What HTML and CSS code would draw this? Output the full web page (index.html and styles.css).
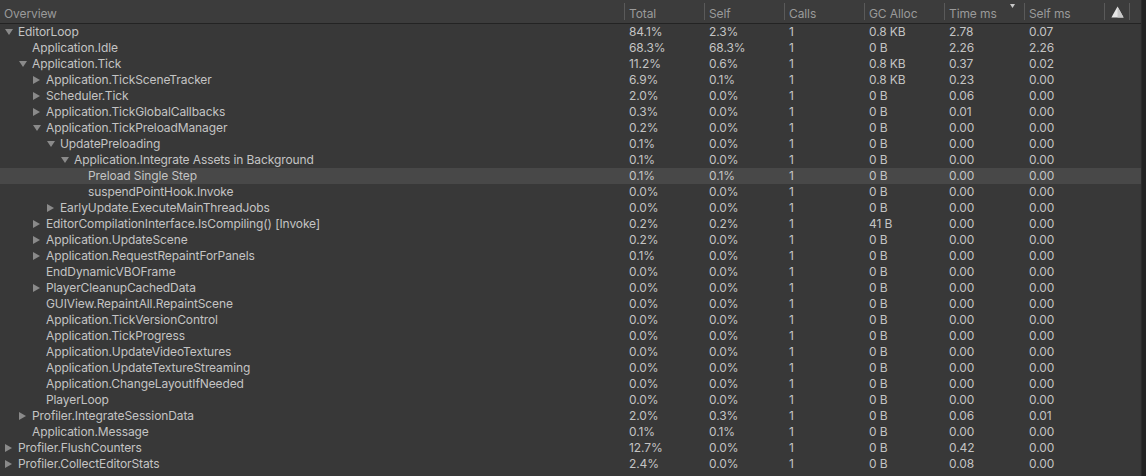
FILE: index.html
```html
<!DOCTYPE html>
<html>
<head>
<meta charset="utf-8">
<link rel="stylesheet" href="styles.css">
</head>
<body>
<div class="panel">
  <div class="table">
    <div class="head">
      <div class="hc name">Overview</div>
      <div class="hc num sep">Total</div>
      <div class="hc num sep">Self</div>
      <div class="hc num sep">Calls</div>
      <div class="hc num sep">GC Alloc</div>
      <div class="hc num sep sorted">Time ms<svg class="sort" width="5" height="4" viewBox="0 0 5 4"><path d="M0 0H5L2.5 4Z" fill="#c8c8c8"/></svg></div>
      <div class="hc num sep">Self ms</div>
      <div class="hc warn sep"><svg width="13" height="12" viewBox="0 0 13 12"><path d="M6.5 0.5L12.6 11.5H0.4Z" fill="#e6e6e6"/><path d="M6.5 0.5L12.6 11.5H6.5Z" fill="#c9c9c9"/></svg></div>
      <div class="hc tail sep"></div>
    </div>
    <div class="body" id="body"></div>
  </div>
  <div class="edge"></div>
</div>
<script src="app.js"></script>
</body>
</html>
```

FILE: app.js
```js
const rows = [
  [0,'e','EditorLoop','84.1%','2.3%','1','0.8 KB','2.78','0.07'],
  [1,'','Application.Idle','68.3%','68.3%','1','0 B','2.26','2.26'],
  [1,'e','Application.Tick','11.2%','0.6%','1','0.8 KB','0.37','0.02'],
  [2,'c','Application.TickSceneTracker','6.9%','0.1%','1','0.8 KB','0.23','0.00'],
  [2,'c','Scheduler.Tick','2.0%','0.0%','1','0 B','0.06','0.00'],
  [2,'c','Application.TickGlobalCallbacks','0.3%','0.0%','1','0 B','0.01','0.00'],
  [2,'e','Application.TickPreloadManager','0.2%','0.0%','1','0 B','0.00','0.00'],
  [3,'e','UpdatePreloading','0.1%','0.0%','1','0 B','0.00','0.00'],
  [4,'e','Application.Integrate Assets in Background','0.1%','0.0%','1','0 B','0.00','0.00'],
  [5,'','Preload Single Step','0.1%','0.1%','1','0 B','0.00','0.00','hl'],
  [5,'','suspendPointHook.Invoke','0.0%','0.0%','1','0 B','0.00','0.00'],
  [3,'c','EarlyUpdate.ExecuteMainThreadJobs','0.0%','0.0%','1','0 B','0.00','0.00'],
  [2,'c','EditorCompilationInterface.IsCompiling() [Invoke]','0.2%','0.2%','1','41 B','0.00','0.00'],
  [2,'c','Application.UpdateScene','0.2%','0.0%','1','0 B','0.00','0.00'],
  [2,'c','Application.RequestRepaintForPanels','0.1%','0.0%','1','0 B','0.00','0.00'],
  [2,'','EndDynamicVBOFrame','0.0%','0.0%','1','0 B','0.00','0.00'],
  [2,'c','PlayerCleanupCachedData','0.0%','0.0%','1','0 B','0.00','0.00'],
  [2,'','GUIView.RepaintAll.RepaintScene','0.0%','0.0%','1','0 B','0.00','0.00'],
  [2,'','Application.TickVersionControl','0.0%','0.0%','1','0 B','0.00','0.00'],
  [2,'','Application.TickProgress','0.0%','0.0%','1','0 B','0.00','0.00'],
  [2,'','Application.UpdateVideoTextures','0.0%','0.0%','1','0 B','0.00','0.00'],
  [2,'','Application.UpdateTextureStreaming','0.0%','0.0%','1','0 B','0.00','0.00'],
  [2,'','Application.ChangeLayoutIfNeeded','0.0%','0.0%','1','0 B','0.00','0.00'],
  [2,'','PlayerLoop','0.0%','0.0%','1','0 B','0.00','0.00'],
  [1,'c','Profiler.IntegrateSessionData','2.0%','0.3%','1','0 B','0.06','0.01'],
  [1,'','Application.Message','0.1%','0.1%','1','0 B','0.00','0.00'],
  [0,'c','Profiler.FlushCounters','12.7%','0.0%','1','0 B','0.42','0.00'],
  [0,'c','Profiler.CollectEditorStats','2.4%','0.0%','1','0 B','0.08','0.00']
];
const exp = '<svg width="8" height="6" viewBox="0 0 8 6"><path d="M0 0H8L4 6Z" fill="#8a8a8a"/></svg>';
const col = '<svg width="7" height="8" viewBox="0 0 7 8"><path d="M0 0L7 4L0 8Z" fill="#8a8a8a"/></svg>';
const body = document.getElementById('body');
let html = '';
for (const r of rows) {
  const [lvl, kind, name, ...rest] = r;
  const hl = rest[6] === 'hl';
  const vals = rest.slice(0, 6);
  const icon = kind === 'e' ? exp : kind === 'c' ? col : '';
  html += '<div class="row' + (hl ? ' hl' : '') + '">' +
    '<div class="cell name"><span class="indent" style="width:' + (lvl * 14) + 'px"></span><span class="tog">' + icon + '</span><span class="label">' + name + '</span></div>' +
    vals.map(v => '<div class="cell num">' + v + '</div>').join('') +
    '<div class="cell warn"></div><div class="cell tail"></div></div>';
}
body.innerHTML = html;
```

FILE: styles.css
```css
html, body {
  margin: 0;
  padding: 0;
  background: #383838;
}
body {
  font-family: Inter, "Noto Sans", "Liberation Sans", sans-serif;
  font-size: 12px;
  letter-spacing: -0.1px;
  color: #c4c4c4;
  width: 1146px;
  height: 476px;
  overflow: hidden;
}
.panel {
  display: flex;
  height: 476px;
}
.table {
  width: 1142px;
  display: flex;
  flex-direction: column;
}
.edge {
  width: 4px;
  background: #232323;
  border-left: 1px solid #2c2c2c;
}
.head {
  display: flex;
  height: 23px;
  background: #3c3c3c;
  border-bottom: 1px solid #232323;
  color: #9a9a9a;
}
.hc {
  position: relative;
  display: flex;
  align-items: center;
  padding-left: 5px;
  box-sizing: border-box;
  padding-top: 4px;
}
.hc.sep::before {
  content: "";
  position: absolute;
  left: 0;
  top: 3px;
  bottom: 3px;
  width: 1px;
  background: #5a5a5a;
}
.name {
  width: 624px;
  box-sizing: border-box;
}
.hc.name {
  padding-left: 4px;
}
.num {
  width: 80px;
  box-sizing: border-box;
  padding-left: 5px;
}
.warn {
  width: 25px;
  box-sizing: border-box;
}
.hc.warn {
  justify-content: center;
  padding-left: 1px;
  padding-top: 1px;
}
.tail {
  flex: 1;
}
.sort {
  position: absolute;
  top: 4px;
  right: 9px;
}
.row {
  display: flex;
  height: 16px;
  line-height: 16px;
}
.row.hl {
  background: #484848;
}
.cell {
  white-space: nowrap;
  overflow: hidden;
}
.cell.name {
  display: flex;
  align-items: center;
  padding-left: 5px;
}
.indent {
  flex: none;
}
.tog {
  width: 13px;
  flex: none;
  display: flex;
  align-items: center;
}
.tog svg {
  display: block;
}
.row .num {
  padding-left: 5px;
}
```
